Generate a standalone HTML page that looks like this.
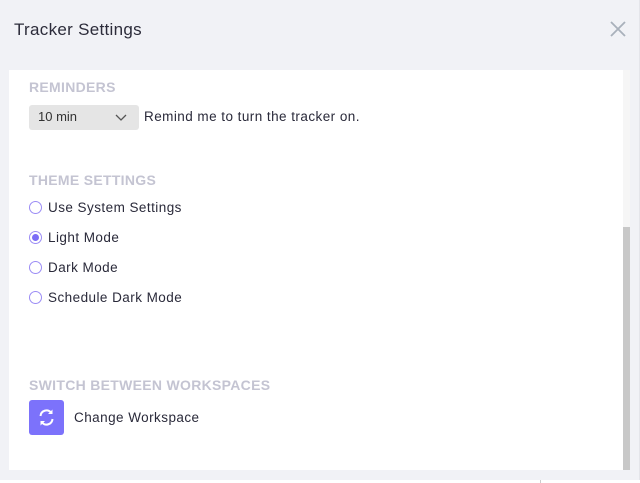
<!DOCTYPE html>
<html><head><style>
*{margin:0;padding:0;box-sizing:border-box}
body{width:640px;height:483px;background:#fff;font-family:"Liberation Sans",sans-serif;position:relative;overflow:hidden}
.bg{position:absolute;left:0;top:0;width:640px;height:480px;background:#f1f2f6;border-right:1px solid #e4e5ea}
.title{position:absolute;left:14px;top:20px;font-size:17px;color:#2c2c3a;letter-spacing:0.3px}
.panel{position:absolute;left:9px;top:70px;width:614px;height:400px;background:#fff}
.track{position:absolute;left:623px;top:70px;width:7px;height:400px;background:#f6f6f6}
.thumb{position:absolute;left:623px;top:227px;width:7px;height:243px;background:#c8c8c8}
.h{position:absolute;left:29px;font-size:14px;font-weight:bold;color:#c4c4d2;letter-spacing:0.3px}
.t{position:absolute;font-size:13.5px;color:#2a2a3a;letter-spacing:0.45px}
.sel{position:absolute;left:29px;top:105px;width:110px;height:25px;background:#e5e5e5;border-radius:3px;font-size:13px;color:#333;padding:4px 9px}
.r{position:absolute;left:29px;width:13px;height:13px;border:1px solid #9b8cf5;border-radius:50%}
.r.on::after{content:"";position:absolute;left:2px;top:2px;width:7px;height:7px;border-radius:50%;background:#7b6cf6}
.ico{position:absolute;left:29px;top:400px;width:35px;height:35px;background:#7c72fb;border-radius:3px}
</style></head><body>
<div class="bg"></div>
<div class="title">Tracker Settings</div>
<svg style="position:absolute;left:609px;top:20px" width="18" height="18"><path d="M2 2L16 16M16 2L2 16" stroke="#a9b1bb" stroke-width="1.8"/></svg>
<div class="panel"></div>
<div class="track"></div><div class="thumb"></div>
<div class="h" style="top:79px">REMINDERS</div>
<div class="sel">10 min<svg style="position:absolute;left:86px;top:9px" width="12" height="8"><path d="M1 1L6 6L11 1" stroke="#555" stroke-width="1.3" fill="none"/></svg></div>
<div class="t" style="left:144px;top:109px">Remind me to turn the tracker on.</div>
<div class="h" style="top:172px">THEME SETTINGS</div>
<div class="r" style="top:201px"></div><div class="t" style="left:48px;top:200px">Use System Settings</div>
<div class="r on" style="top:231px"></div><div class="t" style="left:48px;top:230px">Light Mode</div>
<div class="r" style="top:261px"></div><div class="t" style="left:48px;top:260px">Dark Mode</div>
<div class="r" style="top:291px"></div><div class="t" style="left:48px;top:290px">Schedule Dark Mode</div>
<div class="h" style="top:377px">SWITCH BETWEEN WORKSPACES</div>
<div class="ico"><svg width="35" height="35" viewBox="0 0 35 35"><path d="M11.5 16a6 6 0 0 1 10.5-3.5M23.5 19a6 6 0 0 1-10.5 3.5" stroke="#fff" stroke-width="2" fill="none"/><path d="M23.5 9.5v4.5h-4.5z M11.5 25.5v-4.5h4.5z" fill="#fff"/></svg></div>
<div class="t" style="left:74px;top:410px">Change Workspace</div>
<div style="position:absolute;left:540px;top:480px;width:1px;height:3px;background:#ccc"></div>
</body></html>
